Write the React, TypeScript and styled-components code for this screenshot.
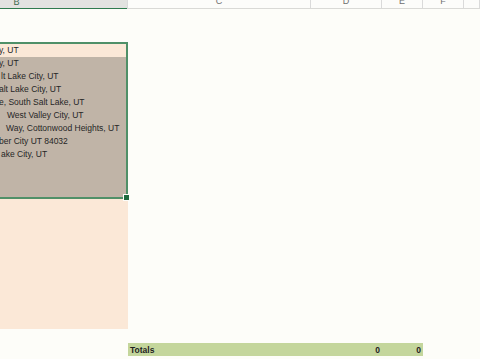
import React from "react";
import styled, { createGlobalStyle } from "styled-components";

const Global = createGlobalStyle`
  html, body { margin: 0; padding: 0; background: #fdfdf9; }
  #root { width: 480px; height: 359px; }
`;

const COLS = "222px 183px 71px 41px 41px 1fr";

const Viewport = styled.div`
  width: 480px;
  height: 359px;
  overflow: hidden;
  background: #fdfdf9;
  font-family: "Liberation Sans", Arial, sans-serif;
`;

const Sheet = styled.div`
  margin-left: -94px;
  width: 574px;
  display: flex;
  flex-direction: column;
`;

const HeaderRow = styled.div`
  display: grid;
  grid-template-columns: ${COLS};
  height: 8px;
  border-bottom: 1px solid #d9d9d6;
  background: #fcfcfa;
`;

const HeaderCell = styled.div<{ $selected?: boolean }>`
  display: flex;
  align-items: flex-end;
  justify-content: center;
  overflow: hidden;
  font-size: 9px;
  line-height: 9px;
  color: ${(p) => (p.$selected ? "#3b6b4f" : "#6f6f6f")};
  background: ${(p) => (p.$selected ? "#e2e2e0" : "transparent")};
  border-right: 1px solid #dadada;
  box-shadow: ${(p) => (p.$selected ? "inset 0 -1px 0 #2f7a4e" : "none")};
  margin-bottom: ${(p) => (p.$selected ? "-1px" : "0")};
  span { transform: translateY(-2px); }
`;

const Body = styled.div`
  display: grid;
  grid-template-columns: ${COLS};
  height: 321px;
`;

const ColumnB = styled.div`
  display: flex;
  flex-direction: column;
`;

const TopSpace = styled.div`
  height: 33px;
`;

const Selection = styled.div`
  height: 157px;
  border-top: 2px solid #4f9068;
  border-right: 2px solid #4f9068;
  border-bottom: 2px solid #4f9068;
  box-sizing: border-box;
  background: #c0b4a7;
  position: relative;
  display: flex;
  flex-direction: column;
`;

const Handle = styled.div`
  position: absolute;
  right: -4px;
  bottom: -4px;
  width: 5px;
  height: 5px;
  background: #1f6b40;
  border: 1px solid #fdfdf9;
`;

const Row = styled.div<{ $active?: boolean }>`
  height: 13px;
  flex: none;
  line-height: 13px;
  font-size: 8.5px;
  color: #262626;
  white-space: nowrap;
  overflow: hidden;
  background: ${(p) => (p.$active ? "#fbe8d7" : "transparent")};
`;

const OrangeFill = styled.div`
  height: 130px;
  background: #fbe8d7;
`;

const Gap = styled.div`
  height: 13px;
`;

const TotalsRow = styled.div`
  display: grid;
  grid-template-columns: ${COLS};
  height: 13px;
`;

const TotalCell = styled.div<{ $right?: boolean }>`
  background: #c4d69c;
  display: flex;
  align-items: center;
  justify-content: ${(p) => (p.$right ? "flex-end" : "flex-start")};
  padding: 0 2px;
  font-size: 8.5px;
  font-weight: 700;
  color: #1f1f1f;
`;

const rows: { text: string; indent: number }[] = [
  { text: "y, UT", indent: -1 },
  { text: "y, UT", indent: -1 },
  { text: "lt Lake City, UT", indent: 1 },
  { text: "alt Lake City, UT", indent: -1 },
  { text: "e, South Salt Lake, UT", indent: -1 },
  { text: "West Valley City, UT", indent: 7 },
  { text: "Way, Cottonwood Heights, UT", indent: 6 },
  { text: "ber City UT 84032", indent: -1 },
  { text: "ake City, UT", indent: 1 },
  { text: "", indent: 0 },
  { text: "", indent: 0 },
  { text: "", indent: 0 },
];

export default function App() {
  return (
    <>
      <Global />
      <Viewport>
        <Sheet>
          <HeaderRow>
            <HeaderCell $selected><span>B</span></HeaderCell>
            <HeaderCell><span>C</span></HeaderCell>
            <HeaderCell><span>D</span></HeaderCell>
            <HeaderCell><span>E</span></HeaderCell>
            <HeaderCell><span>F</span></HeaderCell>
            <HeaderCell />
          </HeaderRow>
          <Body>
            <ColumnB>
              <TopSpace />
              <Selection>
                {rows.map((r, i) => (
                  <Row key={i} $active={i === 0} style={{ textIndent: 94 + r.indent }}>
                    {r.text}
                  </Row>
                ))}
                <Handle />
              </Selection>
              <OrangeFill />
            </ColumnB>
            <div />
            <div />
            <div />
            <div />
            <div />
          </Body>
          <Gap />
          <TotalsRow>
            <div />
            <TotalCell>Totals</TotalCell>
            <TotalCell $right>0</TotalCell>
            <TotalCell $right>0</TotalCell>
            <div />
            <div />
          </TotalsRow>
        </Sheet>
      </Viewport>
    </>
  );
}
